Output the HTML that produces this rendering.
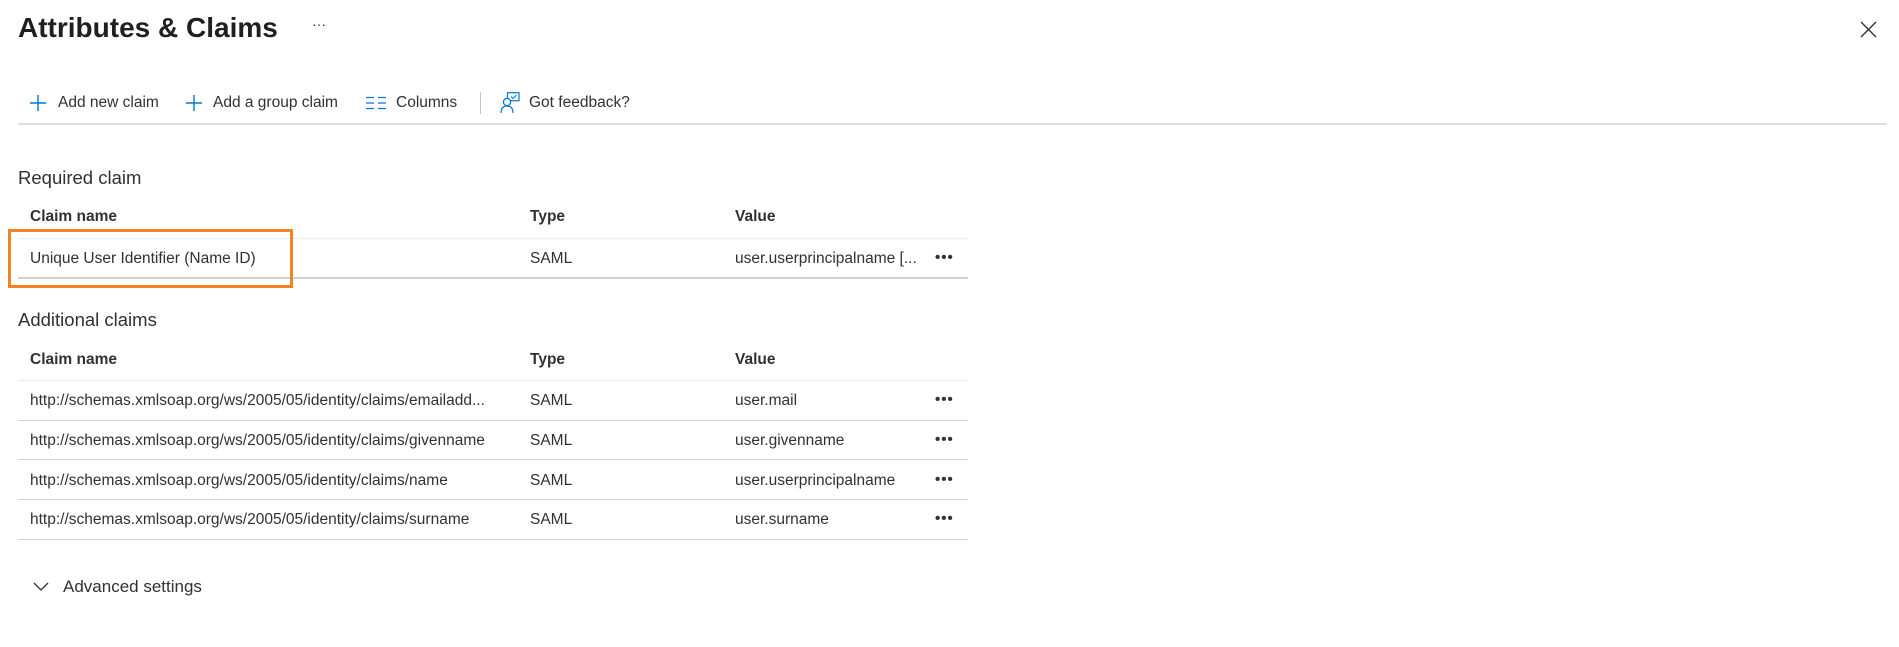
<!DOCTYPE html>
<html><head><meta charset="utf-8"><style>
*{margin:0;padding:0;box-sizing:border-box}
body{width:1899px;height:647px;background:#fff;font-family:"Liberation Sans",sans-serif;color:#323130;position:relative;overflow:hidden}
.a{position:absolute;white-space:nowrap}
.t{font-size:15.5px;line-height:20px}
.h{font-size:15.5px;font-weight:bold;line-height:20px;color:#323130}
.line{position:absolute;height:1px;background:#e1dfdd}
.dots{position:absolute;font-size:15px;letter-spacing:1px;font-weight:bold;color:#323130}
</style></head><body>
<div class="a" style="left:18px;top:10px;font-size:28px;font-weight:bold;color:#201f1e;line-height:36px">Attributes &amp; Claims</div>
<div class="a" style="left:312px;top:16px;font-size:14px;color:#323130">···</div>
<svg class="a" style="left:1860px;top:21px" width="17" height="17" viewBox="0 0 17 17"><path d="M1 1L16 16M16 1L1 16" stroke="#323130" stroke-width="1.4"/></svg>

<svg class="a" style="left:29px;top:94px" width="18" height="18"><path d="M9 1V17M1 9H17" stroke="#0078d4" stroke-width="1.4"/></svg>
<div class="a t" style="left:58px;top:93px;color:#323130">Add new claim</div>
<svg class="a" style="left:185px;top:94px" width="18" height="18"><path d="M9 1V17M1 9H17" stroke="#0078d4" stroke-width="1.4"/></svg>
<div class="a t" style="left:213px;top:93px">Add a group claim</div>
<svg class="a" style="left:366px;top:96px" width="20" height="14"><path d="M0 1.5H8M12 1.5H20M0 7H8M12 7H20M0 12.5H8M12 12.5H20" stroke="#0078d4" stroke-width="1.3"/></svg>
<div class="a t" style="left:396px;top:93px">Columns</div>
<div class="line" style="left:480px;top:92px;width:1px;height:22px;background:#c8c6c4"></div>
<svg class="a" style="left:500px;top:92px" width="20" height="22" viewBox="0 0 20 22"><rect x="7.5" y="0.7" width="11.5" height="8" fill="none" stroke="#0078d4" stroke-width="1.2"/><path d="M10 8.7L9 11" stroke="#0078d4" stroke-width="1.2"/><circle cx="7" cy="10" r="3.6" fill="#fff" stroke="#0078d4" stroke-width="1.2"/><path d="M1 21C1 16 3.5 14 7 14C10.5 14 13 16 13 21" fill="none" stroke="#0078d4" stroke-width="1.2"/><path d="M11 4.5L13 6.5L16.5 3" fill="none" stroke="#0078d4" stroke-width="1.1"/></svg>
<div class="a t" style="left:529px;top:93px">Got feedback?</div>
<div class="line" style="left:18px;top:123px;width:1869px;height:2px;background:#e1dfdd"></div>

<div class="a" style="left:18px;top:166px;font-size:18.5px;line-height:24px">Required claim</div>
<div class="a h" style="left:30px;top:207px">Claim name</div>
<div class="a h" style="left:530px;top:207px">Type</div>
<div class="a h" style="left:735px;top:207px">Value</div>
<div class="line" style="left:18px;top:238px;width:950px;background:#edebe9"></div>
<div class="a t" style="left:30px;top:249px">Unique User Identifier (Name ID)</div>
<div class="a t" style="left:530px;top:249px">SAML</div>
<div class="a t" style="left:735px;top:249px">user.userprincipalname [...</div>
<div class="dots" style="left:935px;top:249px">•••</div>
<div class="line" style="left:18px;top:277px;width:950px;height:2px;background:#d2d0ce"></div>
<div class="a" style="left:8px;top:229px;width:285px;height:59px;border:3px solid #f58225"></div>

<div class="a" style="left:18px;top:308px;font-size:18.5px;line-height:24px">Additional claims</div>
<div class="a h" style="left:30px;top:350px">Claim name</div>
<div class="a h" style="left:530px;top:350px">Type</div>
<div class="a h" style="left:735px;top:350px">Value</div>
<div class="line" style="left:18px;top:380px;width:950px;background:#edebe9"></div>

<div class="a t" style="left:30px;top:391px">http://schemas.xmlsoap.org/ws/2005/05/identity/claims/emailadd...</div>
<div class="a t" style="left:530px;top:391px">SAML</div>
<div class="a t" style="left:735px;top:391px">user.mail</div>
<div class="dots" style="left:935px;top:391px">•••</div>
<div class="line" style="left:18px;top:420px;width:950px;background:#d2d0ce"></div>

<div class="a t" style="left:30px;top:431px">http://schemas.xmlsoap.org/ws/2005/05/identity/claims/givenname</div>
<div class="a t" style="left:530px;top:431px">SAML</div>
<div class="a t" style="left:735px;top:431px">user.givenname</div>
<div class="dots" style="left:935px;top:431px">•••</div>
<div class="line" style="left:18px;top:459px;width:950px;background:#d2d0ce"></div>

<div class="a t" style="left:30px;top:471px">http://schemas.xmlsoap.org/ws/2005/05/identity/claims/name</div>
<div class="a t" style="left:530px;top:471px">SAML</div>
<div class="a t" style="left:735px;top:471px">user.userprincipalname</div>
<div class="dots" style="left:935px;top:471px">•••</div>
<div class="line" style="left:18px;top:499px;width:950px;background:#d2d0ce"></div>

<div class="a t" style="left:30px;top:510px">http://schemas.xmlsoap.org/ws/2005/05/identity/claims/surname</div>
<div class="a t" style="left:530px;top:510px">SAML</div>
<div class="a t" style="left:735px;top:510px">user.surname</div>
<div class="dots" style="left:935px;top:510px">•••</div>
<div class="line" style="left:18px;top:539px;width:950px;background:#d2d0ce"></div>

<svg class="a" style="left:33px;top:582px" width="16" height="10"><path d="M1 1L8 8L15 1" fill="none" stroke="#323130" stroke-width="1.3"/></svg>
<div class="a" style="left:63px;top:576px;font-size:17px;line-height:22px">Advanced settings</div>
</body></html>
